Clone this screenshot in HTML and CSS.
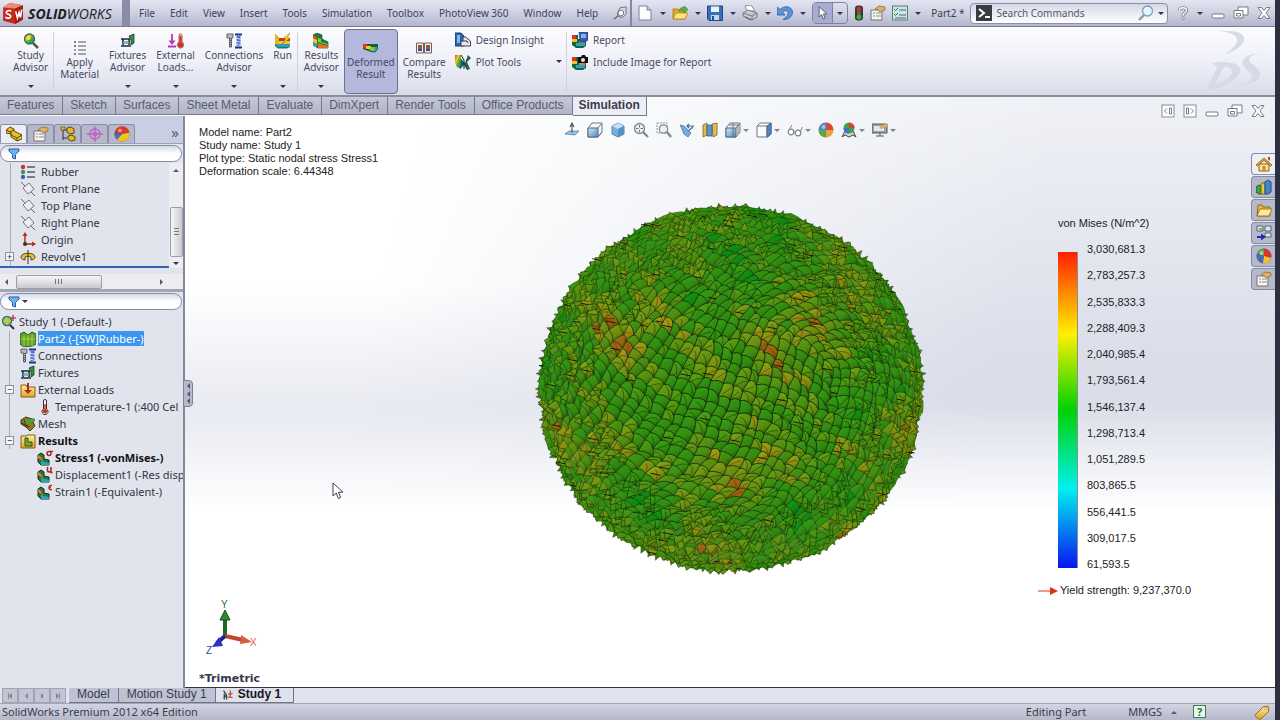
FILE: index.html
```html
<!DOCTYPE html>
<html lang="en">
<head>
    <meta charset="UTF-8">
    <title>SolidWorks - Part2</title>
    <link rel="stylesheet" href="styles.css">
</head>
<body>
    <!-- Icon sprite -->
    <svg class="sprite" xmlns="http://www.w3.org/2000/svg" aria-hidden="true">
        <defs>
            <linearGradient id="rainbow" x1="0" y1="0" x2="1" y2="1">
                <stop offset="0" stop-color="#e8321c"/><stop offset=".3" stop-color="#f3c81e"/><stop offset=".6" stop-color="#3fae3a"/><stop offset="1" stop-color="#1b6fc8"/>
            </linearGradient>
            <linearGradient id="blue" x1="0" y1="0" x2="1" y2="1">
                <stop offset="0" stop-color="#d4eaf8"/><stop offset="1" stop-color="#4d87bd"/>
            </linearGradient>
            <linearGradient id="gold" x1="0" y1="0" x2="0" y2="1">
                <stop offset="0" stop-color="#fff0a0"/><stop offset="1" stop-color="#dea32a"/>
            </linearGradient>
        </defs>
        <symbol id="i-logo" viewBox="0 0 20 20"><path d="M1 5l6-4 12 2v13l-7 4-11-3z" fill="#c22a1c"/><path d="M1 5l6-4 12 2-7 3z" fill="#f08a70"/><path d="M12 6l7-3v13l-7 4z" fill="#a51b12"/><path d="M8.500 8.500c-2-1.500-5-.5-4.500 1.500.5 1.500 4 1 4 3s-3 2-5 .8M12.500 8.500l1.500 6 1.500-5 1.300 4.500L18 7" fill="none" stroke="#fff" stroke-width="1.500"/></symbol>
        <symbol id="i-magnify-color" viewBox="0 0 16 16"><path d="M10 10l5 5" stroke="#555" stroke-width="2.500"/><circle cx="6.500" cy="6" r="5" fill="url(#rainbow)" stroke="#3c6a52" stroke-width="1.300"/><circle cx="5.500" cy="5" r="2" fill="#ffe66a" opacity=".8"/></symbol>
        <symbol id="i-list" viewBox="0 0 16 16"><path d="M7 3h8M7 8h8M7 13h8" stroke="#555568" stroke-width="1.500"/><circle cx="3" cy="3" r="2.200" fill="#c8323c"/><circle cx="3" cy="8" r="2.200" fill="#3b9c3b"/><circle cx="3" cy="13" r="2.200" fill="#3b62b5"/></symbol>
        <symbol id="i-listgrey" viewBox="0 0 16 16"><path d="M6 2h8M6 6h8M6 10h8M6 14h8" stroke="#55565e" stroke-width="1.200"/><path d="M2 1h2v2H2z" fill="#c66"/><path d="M2 5h2v2H2z" fill="#a64"/><path d="M2 9h2v2H2z" fill="#a9a"/><path d="M2 13h2v2H2z" fill="#886"/></symbol>
        <symbol id="i-fixture" viewBox="0 0 16 16"><path d="M9 3l5-2v9l-3 2V7z" fill="#2f8f49" stroke="#173d22" stroke-width=".8"/><path d="M1 6h9M3 6v6M9 6v6M1 13h10" stroke="#222c33" stroke-width="1.600" fill="none"/><path d="M3.500 8h5v3h-5z" fill="#7eb6d6"/></symbol>
        <symbol id="i-loads" viewBox="0 0 16 16"><path d="M4 1v9M0 13.500h8" stroke="#b03ab5" stroke-width="1.800"/><path d="M.5 7.500h7L4 12z" fill="#b03ab5"/><path d="M11 2.500a1.500 1.500 0 013 0V9a3.200 3.200 0 11-3 0z" fill="#e8cfc8" stroke="#8e3423" stroke-width=".8"/><circle cx="12.500" cy="12" r="2.500" fill="#cc2f1c"/><path d="M12.500 3v9" stroke="#cc2f1c" stroke-width="2"/></symbol>
        <symbol id="i-bolts" viewBox="0 0 16 16"><path d="M1 1h6v4H5.500v9h-2V5H1z" fill="#b7b9c0" stroke="#55575f" stroke-width=".9"/><path d="M4.500 5v9" stroke="#666" stroke-dasharray="1 1"/><path d="M9 1.500h7M9 14.500h7" stroke="#1e3080" stroke-width="1.800"/><path d="M10.500 3h4v10h-4z" fill="#4d6fd0"/><path d="M10 5l5 1.500M10 8l5 1.500M10 11l5 1.500" stroke="#d4ddf6"/></symbol>
        <symbol id="i-run" viewBox="0 0 16 16"><path d="M0 1l4 4h11v9l-3 1.500H3L0 13z" fill="#197a55"/><path d="M0 1l4 4v6H0z" fill="#e4b51d"/><path d="M4 5h11v4H4z" fill="#cf3420"/><path d="M4 8h11v3H4z" fill="#e6cc29"/><path d="M0 11h15v3H3z" fill="#2f9bc2"/><path d="M15 0L8 5.500h3L7 11l8-6h-3z" fill="#ffe12c" stroke="#8f6b0a" stroke-width=".5"/></symbol>
        <symbol id="i-results" viewBox="0 0 16 16"><path d="M0 2l4-2 5 2v4l6 3v6H5l-5-3z" fill="#167d3e" stroke="#14512d" stroke-width=".7"/><path d="M0 2l4 2v3L0 5z" fill="#dd4b20"/><path d="M0 5l4 2v4L0 9z" fill="#f0cb25"/><path d="M0 9l4 2v4l-4-3z" fill="#2d9fc0"/><path d="M5 5l3 1v3l7 2v1L5 9z" fill="#8fcb2b"/><path d="M5 10l10 3v2H5z" fill="#e36d20"/></symbol>
        <symbol id="i-deformed" viewBox="0 0 16 16"><path d="M0 4h15v5l-3 3.500-4-.5-8-3z" fill="#1c5b33"/><path d="M0 4h4v5L0 8z" fill="#da3c20"/><path d="M3 6h5v4L3 8.500z" fill="#f2cd2a"/><path d="M7 7h4v4.500L7 10.500z" fill="#7dca47"/><path d="M11 7h3v2l-2 2.500h-1z" fill="#2fa9b4"/></symbol>
        <symbol id="i-compare" viewBox="0 0 16 16"><path d="M.5 3h7v10h-7zM8.500 3h7v10h-7z" fill="#e9ecf4" stroke="#7c5d50"/><path d="M2 5h2v6H2zM10 5h2v6h-2z" fill="#c94324"/><path d="M4 5h2v6H4zM12 5h2v6h-2z" fill="#31806f"/><path d="M2 9h4v2H2zM10 9h4v2h-4z" fill="#2d4fa0"/></symbol>
        <symbol id="i-insight" viewBox="0 0 16 16"><path d="M0 1h6l3 3v10H0z" fill="#2b62ad" stroke="#173c73"/><path d="M2 3h3v8H2z" fill="#84b6e6"/><path d="M6 14h9.500V9l-5-4H8v4H6z" fill="#e2e5ee" stroke="#3a3f4e"/><path d="M8 9h4l1 2" fill="none" stroke="#3a3f4e"/></symbol>
        <symbol id="i-plottools" viewBox="0 0 16 16"><path d="M0 1h6v14l-4-2-2-4z" fill="url(#rainbow)"/><path d="M6 5l4 4 3-8 3 3-4 4 3 7-3 1-3-5-4 4z" fill="#1c6149"/><path d="M6 1l3 5v9" fill="none" stroke="#222"/></symbol>
        <symbol id="i-report" viewBox="0 0 16 16"><path d="M0 3h6v4h8v7l-3 2H4l-4-3z" fill="#12683c"/><path d="M0 3h4v4H0z" fill="#cf3c1e"/><path d="M0 7h5v3H0z" fill="#efc525"/><path d="M4 11h9v3H4z" fill="#30a0cf"/><path d="M7 9h6v2H7z" fill="#e87c23"/><path d="M7 0h9v8l-3 2H8z" fill="#315eac" stroke="#16316b" stroke-width=".6"/><path d="M9 2h5v4H9z" fill="#8ab2e5"/></symbol>
        <symbol id="i-camera" viewBox="0 0 16 16"><path d="M0 3h6v4h8v7l-3 2H4l-4-3z" fill="#12683c"/><path d="M0 3h4v4H0z" fill="#cf3c1e"/><path d="M0 7h5v3H0z" fill="#efc525"/><path d="M4 11h9v3H4z" fill="#30a0cf"/><path d="M7 9h6v2H7z" fill="#e87c23"/><path d="M6 3h3l1-2h3l1 2h2v6H6z" fill="#111"/><circle cx="11" cy="6" r="2" fill="#e5e5e5"/></symbol>
        <symbol id="i-new" viewBox="0 0 16 16"><path d="M2 1h8l4 4v10H2z" fill="#fdfdff" stroke="#7d819a"/><path d="M10 1v4h4" fill="#c9ccdc" stroke="#7d819a"/></symbol>
        <symbol id="i-open" viewBox="0 0 16 16"><path d="M1 4h5l1 2h6v8H1z" fill="#dfa92b" stroke="#a87716" stroke-width=".8"/><path d="M1 14L4 8h12l-3 6z" fill="#ffe27a" stroke="#b5851c" stroke-width=".8"/><path d="M7 6c1-4 4-4 5-3V1l4 3.500L12 8V6c-2-1-3-1-5 0z" fill="#5cb53c" stroke="#32752a" stroke-width=".6"/></symbol>
        <symbol id="i-save" viewBox="0 0 16 16"><path d="M.5 1h15v14.500H2L.5 14z" fill="#3a6fb8" stroke="#1f4685"/><path d="M4 1.500h8V7H4z" fill="#eef3fb"/><path d="M4 10h8v5H4z" fill="#c7d5e8"/><path d="M5 11h2v4H5z" fill="#234e8c"/></symbol>
        <symbol id="i-print" viewBox="0 0 16 16"><path d="M3 1l6-1 4 6H5z" fill="#fff" stroke="#777" stroke-width=".8"/><path d="M1 8l5-3 9 3v4l-5 3-9-4z" fill="#c9cad2" stroke="#666" stroke-width=".8"/><path d="M1 8l9 3 5-3M10 11v4" fill="none" stroke="#666" stroke-width=".8"/><path d="M3 12l6 3" stroke="#555"/></symbol>
        <symbol id="i-undo" viewBox="0 0 16 16"><path d="M0 2v8h8L5.500 7C9 4 12 6 11 9c-.8 2.500-3 4-5 5.500C11 15 15 12 15.500 8 16 2.500 9-1 3 4.500z" fill="#5a93d8" stroke="#2a5da5" stroke-width=".8"/></symbol>
        <symbol id="i-cursor" viewBox="0 0 12 18"><path d="M1 1v13l3.200-3 2.200 5.500 2.300-1L6.500 10.200H11z" fill="#fff" stroke="#3c3f50"/></symbol>
        <symbol id="i-light" viewBox="0 0 10 16"><rect x="1" y=".5" width="8" height="15" rx="3" fill="#3a3536"/><circle cx="5" cy="4" r="2.500" fill="#b3382e"/><circle cx="5" cy="8" r="2" fill="#6e6642"/><circle cx="5" cy="12" r="2.500" fill="#35b43c"/></symbol>
        <symbol id="i-props" viewBox="0 0 16 16"><path d="M1 5h11v10H1z" fill="#f6f4ee" stroke="#77716a"/><path d="M3 8h2M3 11h2M6 8h5M6 11h5" stroke="#8a8a92"/><path d="M5 4l4-3 6 1v3l-5 2-2-2z" fill="#dfae6a" stroke="#87602f" stroke-width=".7"/></symbol>
        <symbol id="i-options" viewBox="0 0 16 16"><rect x=".5" y="1" width="15" height="14" fill="#cbe3e4" stroke="#577d84"/><path d="M2 4l1.500 1.500L6 3M2 9l1.500 1.500L6 8" fill="none" stroke="#27833d"/><path d="M7 5h7M7 10h7M3 13h11" stroke="#4c6b7c"/></symbol>
        <symbol id="i-term" viewBox="0 0 16 16"><rect width="16" height="16" fill="#3a3b42"/><path d="M3 4l5 4-5 4M9 12h5" fill="none" stroke="#fff" stroke-width="2"/></symbol>
        <symbol id="i-search" viewBox="0 0 16 16"><path d="M6 10l-5 5" stroke="#8d98a8" stroke-width="2.400"/><circle cx="9.500" cy="6" r="5" fill="#e6f3fa" stroke="#7ba0b8" stroke-width="1.300"/></symbol>
        <symbol id="i-help" viewBox="0 0 14 16"><path d="M3 5c0-4 8-4 8 0 0 3-4 2.500-4 6" fill="none" stroke="#777b88" stroke-width="3.600"/><path d="M3 5c0-4 8-4 8 0 0 3-4 2.500-4 6" fill="none" stroke="#fff" stroke-width="1.600"/><circle cx="7" cy="14" r="1.500" fill="#fff" stroke="#777b88"/></symbol>
        <symbol id="i-min" viewBox="0 0 14 14"><rect x="1" y="8" width="12" height="4" rx="1" fill="#fff" stroke="#777b88"/></symbol>
        <symbol id="i-restore" viewBox="0 0 16 14"><path d="M5 1h10v8H5z" fill="#fff" stroke="#777b88"/><path d="M1 4.500h9V12H1z" fill="#fff" stroke="#777b88"/><path d="M3.500 7.500h4V10h-4z" fill="none" stroke="#777b88"/></symbol>
        <symbol id="i-close" viewBox="0 0 14 14"><path d="M1 1.500h3.500L7 4.500l2.500-3H13L9 7l4 5.500H9.500L7 9.500l-2.500 3H1L5 7z" fill="#fff" stroke="#777b88"/></symbol>
        <symbol id="i-panel-l" viewBox="0 0 14 14"><rect x="1" y="1" width="12" height="12" fill="#fff" stroke="#888c99"/><path d="M6 4.500L3.500 7 6 9.500M8.500 4h2v6h-2z" fill="none" stroke="#777b88"/></symbol>
        <symbol id="i-panel-r" viewBox="0 0 14 14"><rect x="1" y="1" width="12" height="12" fill="#fff" stroke="#888c99"/><path d="M8 4.500L10.500 7 8 9.500M3.500 4h2v6h-2z" fill="none" stroke="#777b88"/></symbol>
        <symbol id="i-pin" viewBox="0 0 16 16"><path d="M1 15l5-4" stroke="#555" stroke-width="1.300"/><path d="M5 9l3-7 7-1v8l-4 4-5-1z" fill="#d9dae2" stroke="#666977"/><circle cx="9" cy="8" r="3.200" fill="#fff" stroke="#666977"/></symbol>
        <symbol id="i-part" viewBox="0 0 16 16"><path d="M0 4l4-3 4 2v2l8 4v4l-5 2-6-4V8L0 7z" fill="#e6c02c" stroke="#5d4708"/><path d="M0 4l4 2 4-2M5 6v3l6 3 5-3M11 12v3" fill="none" stroke="#5d4708"/></symbol>
        <symbol id="i-config" viewBox="0 0 16 16"><path d="M3 1v13M3 4h4M3 12h4" stroke="#333" fill="none"/><path d="M1 1h4v3H1z" fill="#e6c02c" stroke="#5d4708" stroke-width=".7"/><path d="M7 2l4-1 3 2v4l-4 1-3-2zM8 10l4-1 3 2v3l-4 1-3-2z" fill="#e0ba2c" stroke="#5d4708"/></symbol>
        <symbol id="i-target" viewBox="0 0 16 16"><circle cx="8" cy="8" r="5" fill="none" stroke="#c05fc8" stroke-width="1.300"/><path d="M8 0v16M0 8h16" stroke="#c05fc8" stroke-width="1.300"/><circle cx="8" cy="8" r="2" fill="none" stroke="#c05fc8"/></symbol>
        <symbol id="i-ball" viewBox="0 0 16 16"><circle cx="8" cy="8" r="7.500" fill="#d3382c"/><path d="M8 8L1 5.500A7.500 7.500 0 007 15.400z" fill="#3c6fc4"/><path d="M8 8l-1 7.400A7.500 7.500 0 0015.200 10z" fill="#f0c42c"/><path d="M8 8L1.200 5A7.500 7.500 0 018 .5z" fill="#4ca64b"/><circle cx="5.500" cy="5" r="2" fill="#fff" opacity=".5"/></symbol>
        <symbol id="i-ball-view" viewBox="0 0 16 16"><circle cx="8" cy="8" r="7.500" fill="#e8a33a"/><path d="M8 8V.5A7.500 7.500 0 0115.500 8z" fill="#d9483a"/><path d="M8 8V.5A7.500 7.500 0 00.5 8z" fill="#4f86cc"/><path d="M8 8H.5A7.500 7.500 0 008 15.500z" fill="#55a94c"/><circle cx="5.500" cy="5" r="2" fill="#fff" opacity=".5"/></symbol>
        <symbol id="i-ball-dark" viewBox="0 0 16 16"><circle cx="8" cy="8" r="7.500" fill="#4a4c3a"/><path d="M8 8l7.300-1.500A7.500 7.500 0 013 13.600z" fill="#f2c324"/><path d="M8 8L3 13.600A7.500 7.500 0 01.5 7z" fill="#4a6fb5"/><path d="M8 8L.8 6A7.500 7.500 0 0115.300 6z" fill="#dc3a2a"/><circle cx="6" cy="4.500" r="1.800" fill="#fff" opacity=".5"/></symbol>
        <symbol id="i-funnel" viewBox="0 0 12 12"><path d="M1 1h10v2L7.500 6.500V11l-3-1V6.500L1 3z" fill="#6eb1ee" stroke="#1f5da8"/></symbol>
        <symbol id="i-plane" viewBox="0 0 16 16"><path d="M3 7l6-5 5 6-6 5z" fill="#eceef4" stroke="#777"/><path d="M1 1l4 4M11 11l4 4" stroke="#666"/></symbol>
        <symbol id="i-origin" viewBox="0 0 16 16"><path d="M5 2v10h8" fill="none" stroke="#b52d22" stroke-width="1.500"/><path d="M2.500 4L5 0l2.500 4zM12 9.500l4 2.500-4 2.500z" fill="#b52d22"/><circle cx="5" cy="12" r="2" fill="#333"/></symbol>
        <symbol id="i-revolve" viewBox="0 0 16 16"><path d="M1 8c0-5 14-5 14 0 0 2-3 3-4 3V8c-1-1-5-1-6 0v3c-1 0-4-1-4-3z" fill="#e6c233" stroke="#5d4708"/><path d="M8 1v14" stroke="#333"/></symbol>
        <symbol id="i-study" viewBox="0 0 16 16"><circle cx="6" cy="7" r="4.500" fill="#8fc46d" stroke="#287068" stroke-width="1.300"/><path d="M2 7h8M6 3v8" stroke="#e7c83a"/><path d="M9 11l4 4" stroke="#333" stroke-width="2"/><path d="M9 4h6M12 1v6" stroke="#a5281d" stroke-width="1.200"/></symbol>
        <symbol id="i-meshpart" viewBox="0 0 16 16"><path d="M0 3l4-2 4 3 4-3 4 2v10l-4 2-8 1-4-3z" fill="#61a32f" stroke="#2b5a18"/><path d="M4 5v10M8 4v11M12 4v11M1 8h14" stroke="#c9d93a" stroke-width=".8"/></symbol>
        <symbol id="i-extfolder" viewBox="0 0 16 16"><path d="M1 3h5l1 2h8v10H1z" fill="url(#gold)" stroke="#84600f"/><path d="M8 1v8" stroke="#b32727" stroke-width="2"/><path d="M4 8h8l-4 4z" fill="#b32727"/></symbol>
        <symbol id="i-thermo" viewBox="0 0 16 16"><path d="M6.500 2a1.500 1.500 0 013 0v8a3 3 0 11-3 0z" fill="#fff" stroke="#333"/><circle cx="8" cy="12.300" r="2.200" fill="#cc2f1c"/><path d="M8 5v8" stroke="#cc2f1c" stroke-width="1.500"/></symbol>
        <symbol id="i-mesh" viewBox="0 0 16 16"><path d="M1 4l5-3 9 3-2 2 2 4-5 5-4-4-5-3z" fill="#8b7a2a" stroke="#3f360d"/><path d="M5 5l9-3 1 3-9 3z" fill="#4fa23c"/><path d="M1 7l9 4M4 4l3 8" stroke="#3f360d"/></symbol>
        <symbol id="i-resfolder" viewBox="0 0 16 16"><path d="M1 3h5l1-1h8v13H1z" fill="url(#gold)" stroke="#84600f"/><path d="M5 5h3v4h4v4H5z" fill="#7aa632" stroke="#31520f"/></symbol>
        <symbol id="i-plot" viewBox="0 0 16 16"><path d="M1 5l3-2 3 2v4l5 1v5H4l-3-3z" fill="#197a45" stroke="#11331f"/><path d="M1 5l3 2v3L1 8z" fill="#d98520"/><path d="M4 11l8 2v2H4z" fill="#2fa3b5"/><path d="M4 7l2 1v3H4z" fill="#d44f25"/><path d="M12 1.500h4M12 1.500a2 2 0 102 2c0-1-.5-1.500-1-2" fill="none" stroke="#a82518" stroke-width="1.400"/></symbol>
        <symbol id="i-plot-u" viewBox="0 0 16 16"><path d="M1 5l3-2 3 2v4l5 1v5H4l-3-3z" fill="#197a45" stroke="#11331f"/><path d="M1 5l3 2v3L1 8z" fill="#d98520"/><path d="M4 11l8 2v2H4z" fill="#2fa3b5"/><path d="M4 7l2 1v3H4z" fill="#d44f25"/><path d="M10.500 0v3.500c0 2 3.500 2 3.500 0V0M14 3v2.500h1.500" fill="none" stroke="#a82518" stroke-width="1.500"/></symbol>
        <symbol id="i-plot-e" viewBox="0 0 16 16"><path d="M1 5l3-2 3 2v4l5 1v5H4l-3-3z" fill="#197a45" stroke="#11331f"/><path d="M1 5l3 2v3L1 8z" fill="#d98520"/><path d="M4 11l8 2v2H4z" fill="#2fa3b5"/><path d="M4 7l2 1v3H4z" fill="#d44f25"/><path d="M15 1.500c-4-1-4 5 0 4M11.500 3.500H14" fill="none" stroke="#a82518" stroke-width="1.300"/></symbol>
        <symbol id="i-normal" viewBox="0 0 16 16"><path d="M1 12l4-3h10l-4 4z" fill="#9cc6e4" stroke="#507da5" stroke-width=".8"/><path d="M8 11V2M6 5l2-4 2 4" fill="none" stroke="#525c6c" stroke-width="1.200"/></symbol>
        <symbol id="i-cube" viewBox="0 0 16 16"><path d="M1 6l4-5h10v9l-4 5H1z" fill="#f4f7fa" stroke="#6d7685"/><path d="M1 6h10v9H1z" fill="url(#blue)" stroke="#4f6783"/><path d="M11 6l4-5M11 15l4-5" stroke="#6d7685"/></symbol>
        <symbol id="i-cube-views" viewBox="0 0 16 16"><path d="M1 6l4-5h10v9l-4 5H1z" fill="#f4f7fa" stroke="#6d7685"/><path d="M1 6h10v9H1z" fill="url(#blue)" stroke="#4f6783"/><path d="M11 6l4-5M8 1v14M4 3h10M13 3v9" stroke="#6d7685"/></symbol>
        <symbol id="i-cube-side" viewBox="0 0 16 16"><path d="M1 4l3-3h11v11l-3 3H1z" fill="#fafbfd" stroke="#6d7685"/><path d="M11 4l4-3v11l-4 3z" fill="#4d87c8" stroke="#3a6496"/><path d="M1 4h10v11" fill="none" stroke="#6d7685"/></symbol>
        <symbol id="i-cube-iso" viewBox="0 0 16 16"><path d="M8 1l6 3v8l-6 3-6-3V4z" fill="#78b0dc" stroke="#5084b5"/><path d="M8 1l6 3-6 3-6-3z" fill="#c2e0f3"/><path d="M8 7l6-3v8l-6 3z" fill="#5591c6"/></symbol>
        <symbol id="i-zoomfit" viewBox="0 0 16 16"><circle cx="6.500" cy="6.500" r="5" fill="#eaf0f6" stroke="#7e8591" stroke-width="1.300"/><path d="M10 10l5 5" stroke="#888" stroke-width="2.400"/><path d="M6.500 3v7M3 6.500h7" stroke="#68717e"/><path d="M5.500 5.500h2v2h-2z" fill="#fff"/></symbol>
        <symbol id="i-zoomarea" viewBox="0 0 16 16"><path d="M1 1h10v10H1z" fill="none" stroke="#8d929d" stroke-dasharray="2 1"/><circle cx="7.500" cy="7" r="4.200" fill="#eaf0f6" stroke="#878d98" stroke-width="1.200"/><path d="M11 10l4 5" stroke="#888" stroke-width="2.400"/></symbol>
        <symbol id="i-prev" viewBox="0 0 16 16"><path d="M1 3l4 1 7 7-3 4-4-3-2-5z" fill="#75aede" stroke="#3f79ad" stroke-width=".8"/><path d="M8 4h7M10 2L8 4l2 2M9 9l5-4" fill="none" stroke="#4b6681" stroke-width="1.200"/></symbol>
        <symbol id="i-section" viewBox="0 0 16 16"><path d="M1 3l4-2v12l-4 2zM10 2l5-1v12l-4 2z" fill="#dcc051" stroke="#79641c" stroke-width=".8"/><path d="M5 3h5v11H5z" fill="#5e96c8" stroke="#355f8c" stroke-width=".8"/></symbol>
        <symbol id="i-glasses" viewBox="0 0 16 16"><circle cx="4" cy="10" r="2.800" fill="#fff" stroke="#80848e" stroke-width="1.200"/><circle cx="11" cy="11" r="2.800" fill="#fff" stroke="#80848e" stroke-width="1.200"/><path d="M2 8l3-5M13.500 9l2-4M6.500 10h2" fill="none" stroke="#80848e"/></symbol>
        <symbol id="i-scene" viewBox="0 0 16 16"><path d="M1 15l3-6h8l3 6-3-2-4 2-4-2z" fill="#cfd3da" stroke="#444"/><circle cx="8" cy="6" r="5.500" fill="#3fa052"/><path d="M8 6V.5A5.500 5.500 0 0113.500 6z" fill="#d7452c"/><path d="M8 6H2.500A5.500 5.500 0 008 11.500z" fill="#3d75c4"/></symbol>
        <symbol id="i-monitor" viewBox="0 0 16 16"><path d="M0 2h15v9H0z" fill="#98a0ad" stroke="#50555f"/><path d="M2 4h10v5H2z" fill="#e6e6ea"/><path d="M4 14h8M8 11v3" stroke="#555"/><path d="M7 5l8-4v4l-6 2z" fill="#d9a860"/></symbol>
        <symbol id="i-home" viewBox="0 0 16 16"><path d="M3 8h10v7H3z" fill="#f6e29a" stroke="#8a6513"/><path d="M0 9l8-7 8 7-1.500 1L8 4.500 1.500 10z" fill="#e7a32c" stroke="#8a5a10" stroke-width=".8"/><path d="M6.500 10h3v5h-3z" fill="#c98c2a"/><path d="M12 1h2v4l-2-2z" fill="#b33c25"/></symbol>
        <symbol id="i-books" viewBox="0 0 16 16"><path d="M0 8l3-2 2 1v8H3l-3-2z" fill="#3aa546" stroke="#1d5c26"/><path d="M5 5l4-2v12H5z" fill="#e6cb36" stroke="#7b6614"/><path d="M9 3l3-2 3 2v10l-3 2H9z" fill="#4486c8" stroke="#204f86"/></symbol>
        <symbol id="i-folder" viewBox="0 0 16 16"><path d="M2 3h4l1 2h7v9H1z" fill="#e7b440" stroke="#8f6a17"/><path d="M1 14l3-7h12l-3 7z" fill="#ffe795" stroke="#a27b1f"/></symbol>
        <symbol id="i-palette" viewBox="0 0 16 16"><path d="M1 1h6v5H1zM9 1h6v5H9zM9 8h6v4H9z" fill="#dfe6ea" stroke="#56646e"/><path d="M3 3h3v2H3z" fill="#9ba83c"/><path d="M1 12h6" stroke="#232ea5" stroke-width="2"/><path d="M5 8.500l5 3.500-5 3.500z" fill="#232ea5"/></symbol>
        <symbol id="i-tag" viewBox="0 0 16 16"><path d="M1 11L9 3l5-1 1 5-8 8c-2 1-6-2-6-4z" fill="url(#gold)" stroke="#a06e10"/><circle cx="12" cy="4.500" r="1.200" fill="#fff" stroke="#a06e10" stroke-width=".6"/></symbol>
        <symbol id="i-studytab" viewBox="0 0 16 16"><path d="M2 2l4 6v6M6 8L2 12M3 6v8" fill="none" stroke="#2c3d40" stroke-width="1.500"/><path d="M11 2v9M7 11h7M8 7l6-1" stroke="#c02f24" stroke-width="1.400"/></symbol>
        <symbol id="i-ds" viewBox="0 0 68 64"><path d="M21 2c14-1 26 2 24 9-1 6-9 11-20 15 7-5 13-10 13-15 0-5-8-8-17-9zM12 34c18-3 32 1 29 9-3 9-20 17-34 19l11-24c-2-2-4-3-6-4zM25 38L15 56c11-3 18-9 18-13 0-3-3-5-8-5zM65 25c-9 0-15 2-15 5 0 5 13 9 11 16-1 7-11 10-22 10 8-2 14-4 14-8 0-5-11-9-9-16 2-6 11-8 21-7z" fill="#d8dbe7"/></symbol>
    </svg>

    <!-- Title bar -->
    <header class="titlebar">
        <div class="brand">
            <svg class="brand-icon"><use href="#i-logo"/></svg>
            <span class="brand-name"><b>SOLID</b>WORKS</span>
        </div>
        <nav class="menu">
            <a href="#">File</a>
            <a href="#">Edit</a>
            <a href="#">View</a>
            <a href="#">Insert</a>
            <a href="#">Tools</a>
            <a href="#">Simulation</a>
            <a href="#">Toolbox</a>
            <a href="#">PhotoView 360</a>
            <a href="#">Window</a>
            <a href="#">Help</a>
            <button class="tool" aria-label="Pin menu"><svg class="icon-win"><use href="#i-pin"/></svg></button>
        </nav>
        <div class="quick">
            <button class="tool split" aria-label="New"><svg class="icon"><use href="#i-new"/></svg><i class="caret"></i></button>
            <button class="tool split" aria-label="Open"><svg class="icon"><use href="#i-open"/></svg><i class="caret"></i></button>
            <button class="tool split" aria-label="Save"><svg class="icon"><use href="#i-save"/></svg><i class="caret"></i></button>
            <button class="tool split" aria-label="Print"><svg class="icon"><use href="#i-print"/></svg><i class="caret"></i></button>
            <button class="tool split" aria-label="Undo"><svg class="icon"><use href="#i-undo"/></svg><i class="caret"></i></button>
            <button class="tool select-tool" aria-label="Select"><span class="select-half"><svg class="icon-cursor"><use href="#i-cursor"/></svg></span><i class="caret"></i></button>
            <button class="tool" aria-label="Rebuild"><svg class="icon-light"><use href="#i-light"/></svg></button>
            <button class="tool" aria-label="File properties"><svg class="icon"><use href="#i-props"/></svg></button>
            <button class="tool split" aria-label="Options"><svg class="icon"><use href="#i-options"/></svg><i class="caret"></i></button>
        </div>
        <span class="doc-name">Part2 *</span>
        <div class="search">
            <svg class="icon"><use href="#i-term"/></svg>
            <input type="text" aria-label="Search Commands" placeholder="Search Commands">
            <svg class="icon"><use href="#i-search"/></svg>
            <i class="caret"></i>
        </div>
        <div class="window-buttons">
            <button class="tool split" aria-label="Help"><svg class="icon-win"><use href="#i-help"/></svg><i class="caret"></i></button>
            <button class="tool" aria-label="Minimize"><svg class="icon-win"><use href="#i-min"/></svg></button>
            <button class="tool" aria-label="Restore"><svg class="icon"><use href="#i-restore"/></svg></button>
            <button class="tool" aria-label="Close"><svg class="icon-win"><use href="#i-close"/></svg></button>
        </div>
    </header>

    <!-- Ribbon -->
    <div class="ribbon">
        <button class="big"><svg class="icon"><use href="#i-magnify-color"/></svg><span>Study<br>Advisor</span><i class="caret"></i></button>
        <span class="sep"></span>
        <button class="big centered"><svg class="icon"><use href="#i-listgrey"/></svg><span>Apply<br>Material</span></button>
        <button class="big"><svg class="icon"><use href="#i-fixture"/></svg><span>Fixtures<br>Advisor</span><i class="caret"></i></button>
        <button class="big"><svg class="icon"><use href="#i-loads"/></svg><span>External<br>Loads...</span><i class="caret"></i></button>
        <button class="big"><svg class="icon"><use href="#i-bolts"/></svg><span>Connections<br>Advisor</span><i class="caret"></i></button>
        <button class="big"><svg class="icon"><use href="#i-run"/></svg><span>Run</span><i class="caret"></i></button>
        <span class="sep"></span>
        <button class="big"><svg class="icon"><use href="#i-results"/></svg><span>Results<br>Advisor</span><i class="caret"></i></button>
        <button class="big centered pressed"><svg class="icon"><use href="#i-deformed"/></svg><span>Deformed<br>Result</span></button>
        <button class="big centered"><svg class="icon"><use href="#i-compare"/></svg><span>Compare<br>Results</span></button>
        <div class="stack">
            <button class="small"><svg class="icon"><use href="#i-insight"/></svg>Design Insight</button>
            <button class="small"><svg class="icon"><use href="#i-plottools"/></svg>Plot Tools<i class="caret"></i></button>
        </div>
        <span class="sep"></span>
        <div class="stack">
            <button class="small"><svg class="icon"><use href="#i-report"/></svg>Report</button>
            <button class="small"><svg class="icon"><use href="#i-camera"/></svg>Include Image for Report</button>
        </div>
        <svg class="ds-mark"><use href="#i-ds"/></svg>
    </div>

    <div class="workspace">
        <div class="tab-row">
            <div class="command-tabs">
                <button>Features</button>
                <button>Sketch</button>
                <button>Surfaces</button>
                <button>Sheet Metal</button>
                <button>Evaluate</button>
                <button>DimXpert</button>
                <button>Render Tools</button>
                <button>Office Products</button>
                <button class="active">Simulation</button>
            </div>
            <div class="doc-buttons">
                <button class="tool" aria-label="Expand left"><svg class="icon-win"><use href="#i-panel-l"/></svg></button>
                <button class="tool" aria-label="Expand right"><svg class="icon-win"><use href="#i-panel-r"/></svg></button>
                <button class="tool" aria-label="Minimize document"><svg class="icon-win"><use href="#i-min"/></svg></button>
                <button class="tool" aria-label="Restore document"><svg class="icon"><use href="#i-restore"/></svg></button>
                <button class="tool" aria-label="Close document"><svg class="icon-win"><use href="#i-close"/></svg></button>
            </div>
        </div>

        <div class="main">
            <!-- Feature manager -->
            <aside class="sidebar">
                <div class="panel-tabs">
                    <button class="active" aria-label="Feature tree"><svg class="icon"><use href="#i-part"/></svg></button>
                    <button aria-label="Property manager"><svg class="icon"><use href="#i-props"/></svg></button>
                    <button aria-label="Configurations"><svg class="icon"><use href="#i-config"/></svg></button>
                    <button aria-label="DimXpert manager"><svg class="icon"><use href="#i-target"/></svg></button>
                    <button aria-label="Display manager"><svg class="icon"><use href="#i-ball-dark"/></svg></button>
                    <span class="more">»</span>
                </div>
                <div class="filter">
                    <svg class="icon-funnel"><use href="#i-funnel"/></svg>
                    <input type="text" aria-label="Filter features">
                </div>
                <div class="tree-pane">
                    <ul class="tree features">
                        <li><svg class="icon"><use href="#i-list"/></svg>Rubber</li>
                        <li><svg class="icon"><use href="#i-plane"/></svg>Front Plane</li>
                        <li><svg class="icon"><use href="#i-plane"/></svg>Top Plane</li>
                        <li><svg class="icon"><use href="#i-plane"/></svg>Right Plane</li>
                        <li><svg class="icon"><use href="#i-origin"/></svg>Origin</li>
                        <li class="expandable"><span class="box">+</span><svg class="icon"><use href="#i-revolve"/></svg>Revolve1</li>
                    </ul>
                    <div class="scroll-v"><i class="caret up"></i><span class="thumb"></span><i class="caret"></i></div>
                </div>
                <div class="scroll-h"><i class="caret left"></i><span class="thumb"></span><i class="caret right"></i></div>
                <div class="splitter"></div>
                <div class="filter">
                    <svg class="icon-funnel"><use href="#i-funnel"/></svg><i class="caret"></i>
                    <input type="text" aria-label="Filter study">
                </div>
                <ul class="tree study">
                    <li class="root"><svg class="icon"><use href="#i-study"/></svg>Study 1 (-Default-)</li>
                    <li><svg class="icon"><use href="#i-meshpart"/></svg><span class="selected">Part2 (-[SW]Rubber-)</span></li>
                    <li><svg class="icon"><use href="#i-bolts"/></svg>Connections</li>
                    <li><svg class="icon"><use href="#i-fixture"/></svg>Fixtures</li>
                    <li class="expandable"><span class="box">−</span><svg class="icon"><use href="#i-extfolder"/></svg>External Loads</li>
                    <li class="child"><svg class="icon"><use href="#i-thermo"/></svg>Temperature-1 (:400 Cel</li>
                    <li><svg class="icon"><use href="#i-mesh"/></svg>Mesh</li>
                    <li class="expandable bold"><span class="box">−</span><svg class="icon"><use href="#i-resfolder"/></svg>Results</li>
                    <li class="child bold"><svg class="icon"><use href="#i-plot"/></svg>Stress1 (-vonMises-)</li>
                    <li class="child"><svg class="icon"><use href="#i-plot-u"/></svg>Displacement1 (-Res disp</li>
                    <li class="child"><svg class="icon"><use href="#i-plot-e"/></svg>Strain1 (-Equivalent-)</li>
                </ul>
            </aside>

            <!-- Graphics area -->
            <section class="viewport">
                <button class="collapse" aria-label="Collapse panel"><i class="caret left"></i><i class="caret left"></i><i class="caret left"></i></button>
                <div class="view-left">
                    <p class="model-info">Model name: Part2<br>Study name: Study 1<br>Plot type: Static nodal stress Stress1<br>Deformation scale: 6.44348</p>
                    <div class="orientation">
                        <svg class="triad" viewBox="0 0 60 60">
                            <path d="M24 36V16" stroke="#1d6a26" stroke-width="4"/>
                            <path d="M19 20l5-10 5 10z" fill="#2f8a35" stroke="#164d1b"/>
                            <path d="M24 36l18 4" stroke="#c2452f" stroke-width="4"/>
                            <path d="M40 35l11 7-12 2z" fill="#dc5a43"/>
                            <path d="M24 36l-8 7" stroke="#1c2488" stroke-width="4"/>
                            <path d="M18 37l-7 10 11-1z" fill="#2a35c0"/>
                            <text x="20" y="8" fill="#3a6a3d">Y</text>
                            <text x="49" y="46" fill="#d9604c">X</text>
                            <text x="5" y="54" fill="#3940a8">Z</text>
                        </svg>
                        <span class="view-name">*Trimetric</span>
                    </div>
                </div>
                <div class="view-center">
                    <div class="view-tools">
                        <button class="tool" aria-label="Normal to"><svg class="icon"><use href="#i-normal"/></svg></button>
                        <button class="tool" aria-label="Front"><svg class="icon"><use href="#i-cube"/></svg></button>
                        <button class="tool" aria-label="Isometric"><svg class="icon"><use href="#i-cube-iso"/></svg></button>
                        <button class="tool" aria-label="Zoom to fit"><svg class="icon"><use href="#i-zoomfit"/></svg></button>
                        <button class="tool" aria-label="Zoom to area"><svg class="icon"><use href="#i-zoomarea"/></svg></button>
                        <button class="tool" aria-label="Previous view"><svg class="icon"><use href="#i-prev"/></svg></button>
                        <button class="tool" aria-label="Section view"><svg class="icon"><use href="#i-section"/></svg></button>
                        <button class="tool split" aria-label="View orientation"><svg class="icon"><use href="#i-cube-views"/></svg><i class="caret"></i></button>
                        <button class="tool split" aria-label="Display style"><svg class="icon"><use href="#i-cube-side"/></svg><i class="caret"></i></button>
                        <button class="tool split" aria-label="Hide or show items"><svg class="icon"><use href="#i-glasses"/></svg><i class="caret"></i></button>
                        <button class="tool" aria-label="Edit appearance"><svg class="icon"><use href="#i-ball-view"/></svg></button>
                        <button class="tool split" aria-label="Apply scene"><svg class="icon"><use href="#i-scene"/></svg><i class="caret"></i></button>
                        <button class="tool split" aria-label="View settings"><svg class="icon"><use href="#i-monitor"/></svg><i class="caret"></i></button>
                    </div>
                    <canvas id="model" width="396" height="380"></canvas>
                </div>
                <div class="view-right">
                    <div class="legend">
                        <p class="legend-title">von Mises (N/m^2)</p>
                        <div class="legend-body">
                            <div class="legend-bar"></div>
                            <ol>
                                <li>3,030,681.3</li>
                                <li>2,783,257.3</li>
                                <li>2,535,833.3</li>
                                <li>2,288,409.3</li>
                                <li>2,040,985.4</li>
                                <li>1,793,561.4</li>
                                <li>1,546,137.4</li>
                                <li>1,298,713.4</li>
                                <li>1,051,289.5</li>
                                <li>803,865.5</li>
                                <li>556,441.5</li>
                                <li>309,017.5</li>
                                <li>61,593.5</li>
                            </ol>
                        </div>
                        <p class="yield"><svg class="yield-arrow" viewBox="0 0 20 10"><path d="M0 5h14" stroke="#e0301c"/><path d="M12 1l8 4-8 4z" fill="#e0301c"/></svg>Yield strength: 9,237,370.0</p>
                    </div>
                    <div class="task-tabs">
                        <button class="active" aria-label="Resources"><svg class="icon"><use href="#i-home"/></svg></button>
                        <button aria-label="Design library"><svg class="icon"><use href="#i-books"/></svg></button>
                        <button aria-label="File explorer"><svg class="icon"><use href="#i-folder"/></svg></button>
                        <button aria-label="View palette"><svg class="icon"><use href="#i-palette"/></svg></button>
                        <button aria-label="Appearances"><svg class="icon"><use href="#i-ball"/></svg></button>
                        <button aria-label="Custom properties"><svg class="icon"><use href="#i-props"/></svg></button>
                    </div>
                </div>
                <svg class="pointer"><use href="#i-cursor"/></svg>
            </section>
        </div>
    </div>

    <div class="study-tabs">
        <div class="nav-buttons">
            <button aria-label="First"><i class="bar"></i><i class="caret left"></i></button>
            <button aria-label="Previous"><i class="caret left"></i></button>
            <button aria-label="Next"><i class="caret right"></i></button>
            <button aria-label="Last"><i class="caret right"></i><i class="bar"></i></button>
        </div>
        <button class="study-tab">Model</button>
        <button class="study-tab">Motion Study 1</button>
        <button class="study-tab active"><svg class="icon-small"><use href="#i-studytab"/></svg>Study 1</button>
    </div>

    <footer class="status">
        <span>SolidWorks Premium 2012 x64 Edition</span>
        <span class="status-mode">Editing Part</span>
        <span class="status-units">MMGS <i class="caret up"></i></span>
        <button class="status-help" aria-label="Quick tips">?</button>
        <button class="tool" aria-label="Tags"><svg class="icon"><use href="#i-tag"/></svg></button>
    </footer>

    <script src="model.js"></script>
</body>
</html>
```
FILE: styles.css
```css
* {
    box-sizing: border-box;
}

body {
    margin: 0;
    height: 100vh;
    display: flex;
    flex-direction: column;
    overflow: hidden;
    border-right: 5px solid #2c3040;
    background-color: #e1e3ee;
    font-family: "Noto Sans", "Open Sans", sans-serif;
    font-size: 11px;
    color: #3a3c4c;
}

button {
    font: inherit;
    color: inherit;
    border: none;
    background: none;
    padding: 0;
    cursor: pointer;
}

p, ul, ol {
    margin: 0;
    padding: 0;
    list-style: none;
}

.sprite {
    position: absolute;
    width: 0;
    height: 0;
}

/* Icons */
.icon {
    width: 16px;
    height: 16px;
    flex: none;
}

.icon-win {
    width: 14px;
    height: 14px;
}

.icon-light {
    width: 10px;
    height: 16px;
}

.icon-cursor {
    width: 10px;
    height: 14px;
}

.icon-funnel,
.icon-small {
    width: 12px;
    height: 12px;
    flex: none;
}

.caret {
    display: inline-block;
    flex: none;
    border: 3px solid transparent;
    border-top-color: #33354a;
    border-bottom-width: 0;
}

.caret.up {
    border-width: 0 3px 3px;
    border-color: transparent transparent #55586a;
}

.caret.left {
    border-width: 3px 3px 3px 0;
    border-color: transparent #55586a;
}

.caret.right {
    border-width: 3px 0 3px 3px;
    border-color: transparent #55586a;
}

.tool {
    display: flex;
    align-items: center;
}

.split {
    gap: 7px;
}

/* Title bar */
.titlebar {
    flex: none;
    height: 27px;
    display: flex;
    align-items: center;
    background: linear-gradient(#e3e5f1, #cfd1e2 50%, #b3b6cc);
    border-bottom: 1px solid #777a90;
    font-size: 10px;
    white-space: nowrap;
}

.brand {
    flex: none;
    width: 130px;
    height: 100%;
    display: flex;
    align-items: center;
    gap: 4px;
    padding-left: 2px;
    border-right: 8px solid #8a8da6;
}

.brand-icon {
    width: 22px;
    height: 22px;
}

.brand-name {
    font-family: "Open Sans", sans-serif;
    font-size: 14px;
    font-style: italic;
    color: #1d1d26;
}

.menu {
    flex: none;
    height: 100%;
    display: flex;
    align-items: center;
    gap: 15px;
    padding: 0 3px 0 9px;
    border-right: 2px solid #84879d;
}

.menu a {
    color: #3c3f5c;
    text-decoration: none;
}

.quick {
    flex: none;
    display: flex;
    align-items: center;
    gap: 6px;
    padding: 0 10px 0 5px;
}

.select-tool {
    height: 22px;
    padding-right: 4px;
    gap: 4px;
    border: 1px solid #7f839f;
    border-radius: 4px;
}

.select-half {
    width: 20px;
    height: 100%;
    display: flex;
    align-items: center;
    justify-content: center;
    background-color: #a9acd0;
    border-right: 1px solid #7f839f;
}

.search {
    flex: 1;
    max-width: 198px;
    height: 21px;
    display: flex;
    align-items: center;
    gap: 4px;
    margin-left: 6px;
    padding: 0 3px 0 5px;
    border: 1px solid #8b8fa8;
    border-radius: 4px;
    background: linear-gradient(#d5d8e6, #fff);
}

.search input {
    flex: 1;
    min-width: 0;
    padding: 0;
    border: none;
    background: none;
    font: inherit;
    font-size: 10px;
    color: #44465a;
}

.search input::placeholder {
    color: #55576a;
}

.window-buttons {
    margin-left: auto;
    display: flex;
    gap: 8px;
    padding: 0 4px 0 7px;
}

/* Ribbon */
.ribbon {
    flex: none;
    height: 70px;
    display: flex;
    padding: 2px 8px 1px;
    background: linear-gradient(#fdfdff, #eff0f8 50%, #d9dce9);
    border-bottom: 2px solid #8b8d9b;
    font-size: 10px;
    line-height: 12px;
    color: #464963;
}

.big {
    display: flex;
    flex-direction: column;
    align-items: center;
    gap: 0;
    padding: 4px 5px;
    text-align: center;
}

.big .caret {
    margin-top: auto;
    margin-bottom: 2px;
}

.centered {
    justify-content: center;
    padding-bottom: 8px;
}

.pressed {
    border: 1px solid #6d7190;
    border-radius: 4px;
    padding: 4px 2px 8px;
    background-color: #b4b8dc;
}

.sep {
    width: 1px;
    margin: 3px 1px 3px 0;
    background-color: #cfd1e0;
}

.stack {
    display: flex;
    flex-direction: column;
    gap: 5px;
    padding: 2px 4px;
}

.small {
    display: flex;
    align-items: center;
    gap: 5px;
    height: 17px;
}

.small .caret {
    margin-left: 30px;
}

.ds-mark {
    width: 68px;
    height: 64px;
    margin-left: auto;
}

/* Workspace */
.workspace {
    flex: 1;
    min-height: 0;
    display: flex;
    flex-direction: column;
    background:
        linear-gradient(to bottom, rgba(255, 255, 255, 0) 52%, #fff 70%),
        linear-gradient(to bottom, rgba(220, 223, 234, 0) 32%, rgba(220, 223, 234, .7) 55%),
        linear-gradient(105deg, rgba(255, 255, 255, 1) 30%, rgba(255, 255, 255, 0) 75%),
        linear-gradient(to bottom, #eff1f6, #d8dce8 50%);
}

.tab-row {
    display: flex;
    align-items: flex-start;
    height: 19px;
}

.command-tabs {
    display: flex;
    font-family: "Liberation Sans", Arial, sans-serif;
    font-size: 12px;
    line-height: 14px;
}

.command-tabs button {
    height: 18px;
    padding: 0 8px 2px 7px;
    color: #5a5d6c;
    background: linear-gradient(#c5c8d6, #b2b5c6);
    border-right: 1px solid #777a8c;
    border-bottom: 1px solid #777a8c;
}

.command-tabs .active {
    height: 19px;
    padding: 0 6px 3px;
    font-weight: bold;
    color: #3a3c48;
    background: #eceef6;
}

.doc-buttons {
    margin-left: auto;
    display: flex;
    gap: 8px;
    padding: 6px 10px 0 0;
}

.main {
    flex: 1;
    min-height: 0;
    display: flex;
}

/* Sidebar */
.sidebar {
    flex: none;
    width: 185px;
    display: flex;
    flex-direction: column;
    background-color: #e1e3ed;
    border-right: 2px solid #85889a;
    color: #33353f;
}

.panel-tabs {
    display: flex;
    height: 28px;
    padding-top: 8px;
    background-color: #c9cee2;
    border-bottom: 1px solid #9da1b5;
}

.panel-tabs button {
    width: 27px;
    display: flex;
    align-items: center;
    justify-content: center;
    background-color: #b4b8ca;
    border: 1px solid #8b8fa5;
    border-bottom: none;
    border-radius: 3px 3px 0 0;
}

.panel-tabs .active {
    background-color: #eceef5;
}

.more {
    margin-left: auto;
    padding-right: 4px;
    font-size: 15px;
    line-height: 16px;
    color: #55586c;
}

.filter {
    flex: none;
    height: 17px;
    display: flex;
    align-items: center;
    gap: 2px;
    margin: 1px 1px 1px 0;
    padding: 0 8px 0 7px;
    border: 1px solid #868ba3;
    border-radius: 9px;
    background: linear-gradient(#d5d9e8, #fff 50%);
}

.filter input {
    flex: 1;
    min-width: 0;
    border: none;
    padding: 0;
    background: none;
    font: inherit;
}

.tree-pane {
    display: flex;
    margin-bottom: 6px;
}

.tree li {
    height: 17px;
    display: flex;
    align-items: center;
    gap: 2px;
    padding-left: 20px;
    white-space: nowrap;
}

.tree .bold {
    font-weight: bold;
    color: #111;
}

.features {
    flex: 1;
    padding: 0 0 1px;
    border-bottom: 2px solid #3565ac;
    background: linear-gradient(#a9acb8, #a9acb8) 10px 0 / 1px 100% no-repeat;
}

.features li {
    gap: 5px;
}

.study {
    flex: 1;
    min-height: 0;
    overflow: hidden;
    padding-top: 2px;
    background: linear-gradient(#a9acb8, #a9acb8) 9px 20px / 1px 118px no-repeat;
}

.tree .root {
    padding-left: 1px;
}

.tree .expandable {
    padding-left: 5px;
}

.expandable .icon {
    margin-left: 4px;
}

.features .expandable .icon {
    margin-left: 1px;
}

.tree .child {
    padding-left: 37px;
}

.box {
    width: 9px;
    height: 9px;
    border: 1px solid #8e919c;
    background-color: #f3f4f8;
    font-size: 9px;
    font-weight: normal;
    line-height: 7px;
    text-align: center;
}

.selected {
    background-color: #3b96ee;
    color: #fff;
    line-height: 15px;
}

.scroll-v {
    width: 14px;
    display: flex;
    flex-direction: column;
    align-items: center;
    justify-content: space-between;
    padding: 6px 0 3px;
    background-color: #ededf1;
}

.scroll-v .thumb {
    width: 13px;
    height: 50px;
    margin-top: 30px;
    border: 1px solid #9a9ca6;
    border-radius: 2px;
    background: linear-gradient(#777, #777) center 20px / 5px 1px no-repeat, linear-gradient(#777, #777) center 23px / 5px 1px no-repeat, linear-gradient(#777, #777) center 26px / 5px 1px no-repeat, linear-gradient(90deg, #f6f6f8, #c9cad0);
}

.scroll-h {
    flex: none;
    height: 15px;
    display: flex;
    align-items: center;
    padding: 0 20px 0 5px;
    background-color: #ededf1;
}

.scroll-h .thumb {
    width: 86px;
    height: 14px;
    margin: 0 auto 0 8px;
    border: 1px solid #9a9ca6;
    border-radius: 2px;
    background: linear-gradient(#777, #777) 38px center / 1px 5px no-repeat, linear-gradient(#777, #777) 41px center / 1px 5px no-repeat, linear-gradient(#777, #777) 44px center / 1px 5px no-repeat, linear-gradient(#f6f6f8, #c9cad0);
}

.splitter {
    flex: none;
    height: 3px;
    background-color: #a2a5b3;
}

/* Viewport */
.viewport {
    flex: 1;
    min-width: 0;
    position: relative;
    display: grid;
    grid-template-columns: 1fr auto 1fr;
    font-family: "Liberation Sans", Arial, sans-serif;
    color: #222;
    border-bottom: 1px solid #33353f;
}

.collapse {
    position: absolute;
    left: -2px;
    top: 264px;
    width: 10px;
    height: 27px;
    display: flex;
    flex-direction: column;
    align-items: center;
    justify-content: space-evenly;
    background-color: #b6bacb;
    border: 1px solid #7d8196;
    border-radius: 0 4px 4px 0;
}

.view-left {
    display: flex;
    flex-direction: column;
    justify-content: space-between;
    padding: 10px 0 0 14px;
}

.model-info {
    line-height: 13px;
}

.orientation {
    display: flex;
    flex-direction: column;
    align-items: flex-start;
    gap: 11px;
}

.triad {
    width: 60px;
    height: 60px;
    margin-left: 2px;
    font-size: 10px;
}

.view-name {
    font-family: "DejaVu Sans", sans-serif;
    font-weight: bold;
    color: #33364a;
    line-height: 16px;
}

.view-center {
    display: flex;
    flex-direction: column;
    align-items: center;
}

.view-tools {
    display: flex;
    gap: 7px;
    padding-top: 6px;
}

.view-tools .split {
    gap: 2px;
}

.view-tools .caret {
    opacity: .6;
}

#model {
    margin-top: 61px;
}

.view-right {
    display: flex;
    justify-content: flex-end;
}

.legend {
    padding-top: 101px;
}

.legend-title {
    padding-left: 20px;
    line-height: 13px;
}

.legend-body {
    display: flex;
    gap: 9px;
    padding: 13px 0 0 20px;
    height: 341px;
}

.legend-bar {
    width: 20px;
    margin: 9px 0 3px;
    background: linear-gradient(#ff1e00, #ff8a00 13%, #fff000 26%, #00d200 50%, #00f0f0 75%, #0a14f0);
    border-right: 1px solid #8c8c96;
}

.legend ol {
    display: flex;
    flex-direction: column;
    justify-content: space-between;
    line-height: 13px;
}

.yield {
    display: flex;
    align-items: center;
    gap: 2px;
    margin-top: 13px;
    line-height: 13px;
}

.yield-arrow {
    width: 20px;
    height: 10px;
}

.task-tabs {
    width: 24px;
    margin: 37px 0 0 60px;
}

.task-tabs button {
    width: 24px;
    height: 22px;
    margin-bottom: 1px;
    display: flex;
    align-items: center;
    justify-content: center;
    background-color: #b4b9cc;
    border: 1px solid #878ba2;
    border-right: none;
    border-radius: 4px 0 0 4px;
}

.task-tabs .active {
    background-color: #eef0f6;
}

.pointer {
    position: absolute;
    left: 147px;
    top: 366px;
    width: 12px;
    height: 18px;
}

/* Bottom tabs and status bar */
.study-tabs {
    flex: none;
    height: 15px;
    display: flex;
    font-family: "Liberation Sans", Arial, sans-serif;
    font-size: 12px;
    line-height: 13px;
}

.nav-buttons {
    display: flex;
    padding: 0 3px 0 2px;
}

.nav-buttons button {
    width: 16px;
    display: flex;
    align-items: center;
    justify-content: center;
    background-color: #c3c5d2;
    border: 1px solid #a0a3b2;
}

.nav-buttons .caret {
    opacity: .6;
}

.nav-buttons .bar {
    width: 1px;
    height: 6px;
    background-color: #8a8d9c;
}

.study-tab {
    display: flex;
    align-items: center;
    gap: 4px;
    padding: 0 8px 1px;
    background-color: #bfc2d2;
    border: 1px solid #70738a;
    border-top: none;
    border-left: none;
}

.study-tab.active {
    padding: 0 12px 1px 6px;
    font-weight: bold;
    color: #15161d;
    background-color: #dfe1eb;
}

.status {
    flex: none;
    height: 17px;
    display: flex;
    align-items: center;
    padding: 0 5px 1px 2px;
    background: linear-gradient(#d3d5e2, #b5b8ca);
    border-top: 1px solid #a3a6b8;
}

.status-mode {
    margin-left: auto;
}

.status-units {
    margin-left: 42px;
}

.status-units .caret {
    margin: 0 16px 2px 6px;
}

.status-help {
    width: 13px;
    height: 13px;
    margin-right: 48px;
    border: 1px solid #39805a;
    background-color: #e9f6ee;
    font-weight: bold;
    line-height: 10px;
    color: #1c7a3d;
}
```
FILE: model.js
```js
// Draws the deformed stress plot: a cube-sphere mesh with jittered nodes
var canvas = document.getElementById("model");
var ctx = canvas.getContext("2d");
var CX = 199, CY = 190, RX = 189, RY = 180;
var DIV = 25;

// Repeatable pseudo random value for a 3D position
function hash(x, y, z) {
    var s = Math.sin(Math.round(x * 999) * 12.9898 + Math.round(y * 999) * 78.233 + Math.round(z * 999) * 37.719) * 43758.5453;
    return s - Math.floor(s);
}

// Smooth low frequency field, used to cluster the hot spots
function field(x, y, z) {
    return (Math.sin(x * 7 + y * 3) + Math.sin(y * 9 - z * 4 + 1) + Math.sin(x * 17 - y * 13 + 2)) / 3;
}

function rotate(p, ax, ay, az) {
    var x = p[0], y = p[1], z = p[2], t;
    t = x * Math.cos(az) - y * Math.sin(az); y = x * Math.sin(az) + y * Math.cos(az); x = t;
    t = y * Math.cos(ax) - z * Math.sin(ax); z = y * Math.sin(ax) + z * Math.cos(ax); y = t;
    t = x * Math.cos(ay) + z * Math.sin(ay); z = -x * Math.sin(ay) + z * Math.cos(ay); x = t;
    return [x, y, z];
}

function node(face, i, j) {
    var a = Math.tan((i / DIV * 2 - 1) * Math.PI / 4);
    var b = Math.tan((j / DIV * 2 - 1) * Math.PI / 4);
    var p = [[a, b, 1], [1, b, -a], [-1, b, a], [a, -1, b], [a, 1, -b]][face];
    var len = Math.hypot(p[0], p[1], p[2]);
    p = [p[0] / len, p[1] / len, p[2] / len];
    var h1 = hash(p[0], p[1], p[2]);
    var h2 = hash(p[1], p[2], p[0]);
    var h3 = hash(p[2], p[0], p[1]);
    var q = rotate(p, -0.25, -0.3, 0.35);
    // swirl the rows so they run in arcs
    var w = (q[0] * q[0] + q[1] * q[1]) * 0.5;
    q = rotate(q, 0, 0, w);
    var r = 1 + (h3 - 0.3) * 0.025;
    var k = 0.026;
    return [(q[0] + (h1 - 0.5) * k) * r, (q[1] + (h2 - 0.5) * k) * r, q[2]];
}

function sx(p) { return CX + p[0] * RX; }
function sy(p) { return CY + p[1] * RY; }

var cells = [];
for (var f = 0; f < 5; f++) {
    for (var i = 0; i < DIV; i++) {
        for (var j = 0; j < DIV; j++) {
            var c = [node(f, i, j), node(f, i + 1, j), node(f, i + 1, j + 1), node(f, i, j + 1)];
            var mx = (c[0][0] + c[2][0]) / 2, my = (c[0][1] + c[2][1]) / 2, mz = (c[0][2] + c[2][2]) / 2;
            if (mz > -0.05) {
                cells.push({ c: c, x: mx, y: my, z: mz, h: hash(mx, my, mz) });
            }
        }
    }
}
cells.sort(function (a, b) { return a.z - b.z; });

ctx.lineJoin = "round";

// Spikes along the silhouette
for (var s = 0; s < 150; s++) {
    var t = s / 150 * Math.PI * 2;
    var out = 1.01 + hash(s, 1, 2) * 0.026;
    ctx.beginPath();
    ctx.moveTo(CX + Math.cos(t - 0.03) * RX * 0.97, CY + Math.sin(t - 0.03) * RY * 0.97);
    ctx.lineTo(CX + Math.cos(t) * RX * out, CY + Math.sin(t) * RY * out);
    ctx.lineTo(CX + Math.cos(t + 0.03) * RX * 0.97, CY + Math.sin(t + 0.03) * RY * 0.97);
    ctx.fillStyle = s % 5 ? "#3d7a10" : "#6b7a12";
    ctx.fill();
    ctx.strokeStyle = "rgba(15,35,5,.5)";
    ctx.lineWidth = 0.7;
    ctx.stroke();
}

cells.forEach(function (cell) {
    var c = cell.c;
    var heat = field(cell.x, cell.y, cell.z) * 0.45 + (cell.h - 0.5) * 0.6;
    var hue = 104 - Math.max(0, heat + 0.15) * 62;
    if (heat > 0.56) { hue = 38; }
    if (heat < -0.52) { hue = 120; }
    var x = CX + cell.x * RX, y = CY + cell.y * RY;
    var light = 29 + cell.h * 3;

    var g = ctx.createLinearGradient(x - 4, y - 6, x + 4, y + 7);
    g.addColorStop(0, "hsl(" + hue + ",80%," + (light + 4) + "%)");
    g.addColorStop(0.6, "hsl(" + hue + ",80%," + light + "%)");
    g.addColorStop(1, "hsl(" + hue + ",80%," + (light - 10) + "%)");

    ctx.beginPath();
    ctx.moveTo(sx(c[0]), sy(c[0]));
    for (var n = 0; n < 4; n++) {
        var a = c[n], b = c[(n + 1) % 4];
        // edges bulge up a little, which gives the scale look
        var bend = 0.016 * (0.3 + cell.z);
        ctx.quadraticCurveTo(CX + ((a[0] + b[0]) / 2 + bend * 0.6) * RX, CY + ((a[1] + b[1]) / 2 - bend) * RY, sx(b), sy(b));
    }
    ctx.closePath();
    ctx.fillStyle = g;
    ctx.fill();
    ctx.strokeStyle = "rgba(10,40,4," + (0.12 + Math.max(0, cell.z) * 0.7) + ")";
    ctx.lineWidth = 0.9;
    ctx.stroke();

    // tilted elements show up as teeth where the surface turns away
    if (cell.z < 0.75 && cell.h > 0.5) {
        var d = Math.hypot(cell.x, cell.y), ux = cell.x / d, uy = cell.y / d;
        var tip = d > 0.95 ? 3 : 3 + cell.h * 4, base = 5;
        ctx.beginPath();
        ctx.moveTo(x - uy * base - ux * 2, y + ux * base - uy * 2);
        ctx.lineTo(x + ux * tip, y + uy * tip);
        ctx.lineTo(x + uy * base - ux * 2, y - ux * base - uy * 2);
        ctx.fillStyle = g;
        ctx.fill();
        ctx.strokeStyle = "rgba(12,38,4,.6)";
        ctx.stroke();
    }

    // fold lines and stray element edges
    if (cell.h > 0.5 && cell.z > 0.5) {
        var k = Math.floor(cell.h * 97) % 4;
        var from = c[k], to = c[(k + 2) % 4];
        ctx.beginPath();
        ctx.moveTo(sx(from), sy(from));
        ctx.quadraticCurveTo(x + 3, y - 3, (sx(to) + x) / 2, (sy(to) + y) / 2);
        ctx.strokeStyle = heat > 0.35 ? "rgba(160,45,5,.85)" : "rgba(10,40,5,.55)";
        ctx.stroke();
    }
    if (cell.h > 0.94) {
        ctx.beginPath();
        ctx.moveTo(x - 5, y - 1);
        ctx.lineTo(x + 5, y + 1);
        ctx.strokeStyle = "#0a1204";
        ctx.stroke();
    }
});
```
